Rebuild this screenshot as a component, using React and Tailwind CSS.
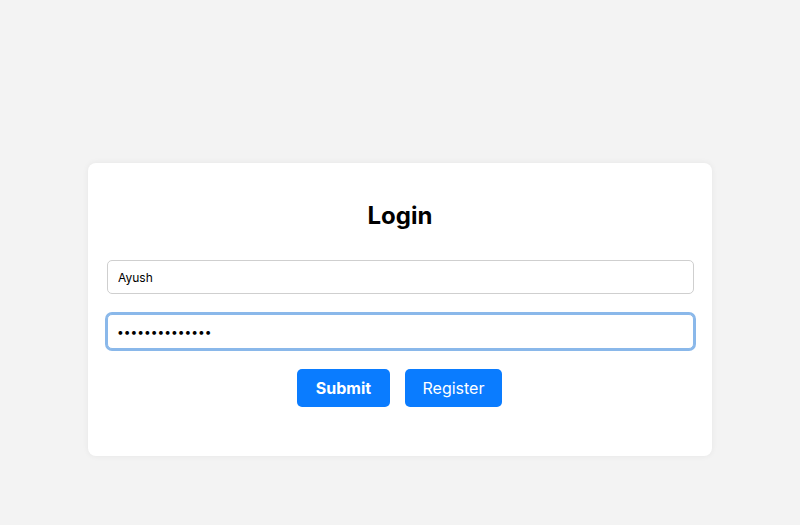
import React from 'react';

const App = () => {
  return (
    <div
      className="min-h-screen bg-[#f3f3f3] pt-[163px]"
      style={{ fontFamily: 'Inter, "Noto Sans", sans-serif' }}
    >
      <div className="mx-auto w-[624px] rounded-lg bg-white px-[18px] pb-[49px] pt-[37px] shadow-[0_0_6px_rgba(0,0,0,0.06)]">
        <h2 className="mb-[28px] text-center text-2xl leading-8 font-bold text-black">
          Login
        </h2>

        <form className="flex flex-col gap-5" onSubmit={(e) => e.preventDefault()}>
          <input
            type="text"
            defaultValue="Ayush"
            className="ml-px h-[34px] w-[587px] rounded-[5px] border border-[#cfcfcf] bg-white px-[10px] text-[12px] text-black outline-none"
          />
          <input
            type="password"
            defaultValue="ayushpassword1"
            className="ml-px h-[35px] w-[587px] rounded-[5px] border border-[#8ab8ea] bg-white px-[9px] text-[12px] text-black outline-none ring-2 ring-[#8ab8ea]"
          />

          <div className="flex justify-center gap-[15px] pr-px">
            <button
              type="submit"
              className="h-[38px] w-[93px] rounded-[5px] bg-[#0a7cff] text-[16px] font-bold text-white"
            >
              Submit
            </button>
            <button
              type="button"
              className="h-[38px] w-[97px] rounded-[5px] bg-[#0a7cff] text-[16px] font-normal text-white"
            >
              Register
            </button>
          </div>
        </form>
      </div>
    </div>
  );
};

export default App;
